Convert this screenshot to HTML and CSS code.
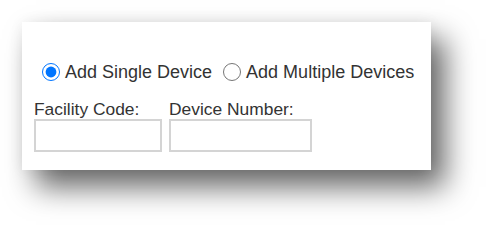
FILE: index.html
```html
<!DOCTYPE html>
<html lang="en">
<head>
  <meta charset="UTF-8" />
  <title>Add Device</title>
  <link rel="stylesheet" href="styles.css">
</head>
<body>

<!-- device panel -->
<div class="panel">
  <div class="mode-row">
    <label class="mode">
      <input type="radio" name="mode" checked />
      <span>Add Single Device</span>
    </label>
    <label class="mode">
      <input type="radio" name="mode" />
      <span>Add Multiple Devices</span>
    </label>
  </div>

  <div class="fields">
    <div class="field facility">
      <label for="facility">Facility Code:</label>
      <input type="text" id="facility" />
    </div>
    <div class="field number">
      <label for="number">Device Number:</label>
      <input type="text" id="number" />
    </div>
  </div>
</div>

</body>
</html>
```

FILE: styles.css
```css
html, body {
  min-height: 225px;
}

body {
  font-family: 'Liberation Sans', Arial, sans-serif;
  background-color: #fff;
  margin: 0;
  padding: 22px 0 0 22px;
  box-sizing: border-box;
}

.panel {
  box-sizing: border-box;
  width: 409px;
  height: 148px;
  padding: 40px 12px 0 12px;
  background-color: #fff;
  box-shadow: 14px 17px 28px rgba(0, 0, 0, 0.6), 0 0 14px rgba(0, 0, 0, 0.06);
}

.mode-row {
  display: flex;
  align-items: center;
  height: 20px;
}

.mode {
  display: flex;
  align-items: center;
  font-size: 18px;
  color: #333;
}

.mode input {
  width: 18px;
  height: 18px;
  margin: 0 5px 0 8px;
}

.mode + .mode input {
  margin-left: 11px;
}

.fields {
  display: flex;
  gap: 7px;
  margin-top: 18px;
}

.field {
  display: flex;
  flex-direction: column;
}

.field label {
  font-size: 17.4px;
  line-height: 19px;
  color: #333;
}

.field input {
  box-sizing: border-box;
  height: 33px;
  border: 2px solid #d4d4d4;
  padding: 0 4px;
  font-size: 15px;
}

.facility input {
  width: 128px;
}

.number input {
  width: 143px;
}
```
